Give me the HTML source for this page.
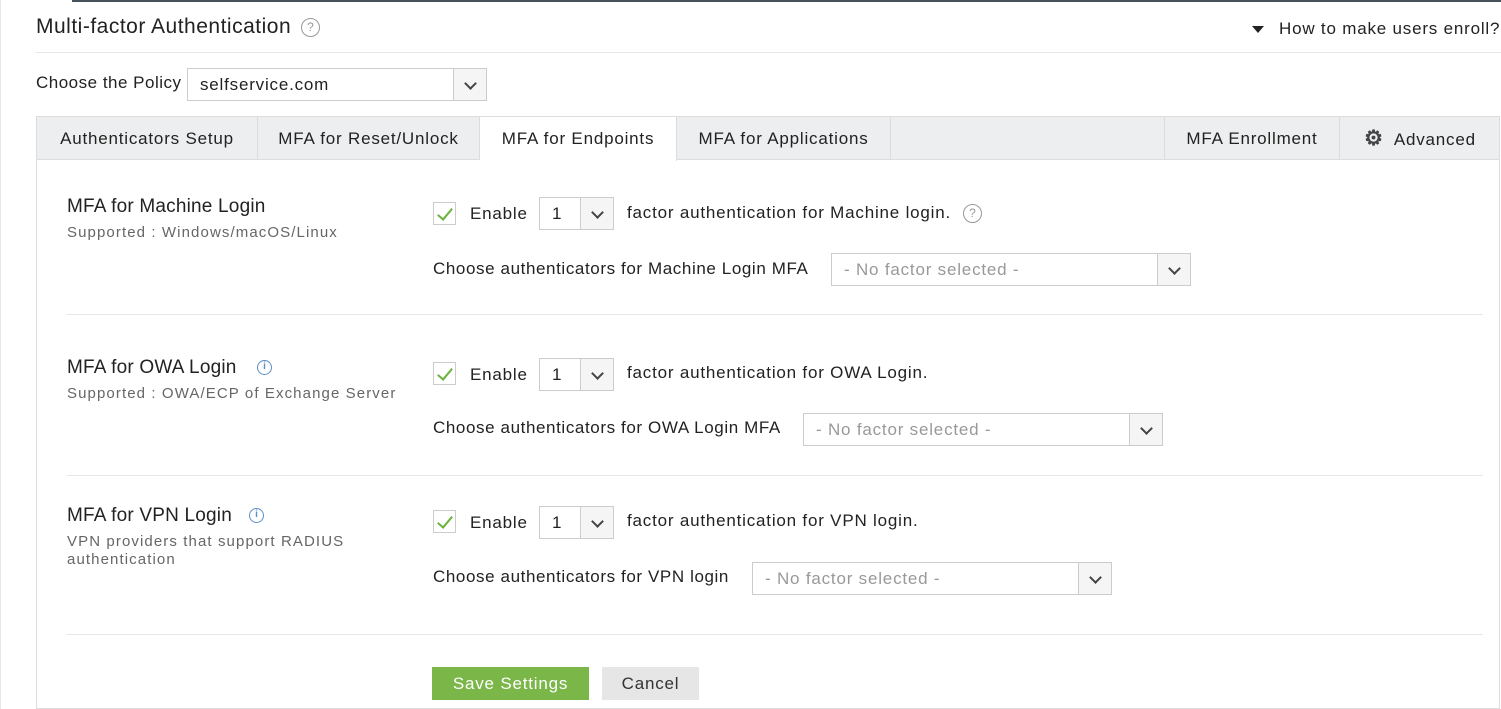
<!DOCTYPE html>
<html><head><meta charset="utf-8"><style>
*{box-sizing:border-box;margin:0;padding:0}
body{width:1501px;height:709px;overflow:hidden;background:#fff;font-family:"Liberation Sans",sans-serif;color:#222;position:relative}
.a{position:absolute}
.t{font-size:17px;white-space:nowrap;letter-spacing:0.8px}
.c{letter-spacing:0.6px}
.h{letter-spacing:0.2px}
.sel{position:absolute;border:1px solid #ccc;background:#fff;height:33px;letter-spacing:0.8px}
.sel .arr{position:absolute;right:0;top:0;bottom:0;width:33px;border-left:1px solid #ccc;background:#f5f5f5}
.sel .arr:after{content:"";position:absolute;left:12px;top:10px;width:7px;height:7px;border-right:2px solid #444;border-bottom:2px solid #444;transform:rotate(45deg)}
.cb{position:absolute;width:23px;height:23px;border:1px solid #ccc;background:#fff}
.cb:after{content:"";position:absolute;left:7px;top:2px;width:6px;height:13px;border-right:2px solid #6bb33f;border-bottom:2px solid #6bb33f;transform:rotate(40deg)}
.tab{position:absolute;top:117px;height:43px;font-size:17px;line-height:43px;text-align:center;border-right:1px solid #dcdcdc;letter-spacing:0.8px;white-space:nowrap}
.hr{position:absolute;height:1px;background:#e6e6e6}
.info{position:absolute;width:15px;height:15px;border:1.5px solid #5b8fc7;border-radius:50%;color:#5b8fc7;font-size:10px;line-height:12px;text-align:center;font-weight:bold}
.q{position:absolute;width:19px;height:19px;border:1.5px solid #999;border-radius:50%;color:#999;font-size:12px;line-height:16px;text-align:center}
.sub{font-size:15px;color:#666;letter-spacing:1.1px;white-space:nowrap}
.ph{color:#999;font-size:17px;position:absolute;left:12px;top:6px}
</style></head><body>
<div class="a" style="left:72px;top:0;width:1429px;height:2px;background:#47525b"></div>
<div class="a" style="left:0;top:0;width:1px;height:709px;background:#e6e6e6"></div>
<div class="a t" style="left:36px;top:15px;font-size:21px;letter-spacing:0.5px">Multi-factor Authentication</div>
<div class="q" style="left:301px;top:18px">?</div>
<div class="a" style="left:1252px;top:26px;border-left:6px solid transparent;border-right:6px solid transparent;border-top:7px solid #222"></div>
<div class="a t" style="left:1279px;top:19px">How to make users enroll?</div>
<div class="hr" style="left:36px;top:52px;width:1465px"></div>
<div class="a t" style="left:36px;top:73px;letter-spacing:0.5px">Choose the Policy</div>
<div class="sel" style="left:187px;top:68px;width:300px"><span class="ph" style="color:#222">selfservice.com</span><div class="arr"></div></div>
<div class="a" style="left:36px;top:116px;width:1464px;height:593px;border:1px solid #ddd"></div>
<div class="a" style="left:37px;top:117px;width:1462px;height:43px;background:#eceeef;border-bottom:1px solid #ddd"></div>
<div class="tab" style="left:37px;width:221px">Authenticators Setup</div>
<div class="tab" style="left:258px;width:222px">MFA for Reset/Unlock</div>
<div class="tab" style="left:480px;width:197px;background:#fff;height:44px">MFA for Endpoints</div>
<div class="tab" style="left:677px;width:214px">MFA for Applications</div>
<div class="tab" style="left:1164px;width:176px;border-left:1px solid #dcdcdc">MFA Enrollment</div>
<div class="tab" style="left:1340px;width:160px;border-right:none"><span style="color:#444;font-size:21px;font-weight:bold">⚙</span>&nbsp; Advanced</div>

<div class="a t h" style="left:67px;top:196px;font-size:19px">MFA for Machine Login</div>
<div class="a sub" style="left:67px;top:224px">Supported : Windows/macOS/Linux</div>
<div class="cb" style="left:433px;top:202px"></div>
<div class="a t" style="left:470px;top:204px">Enable</div>
<div class="sel" style="left:539px;top:197px;width:75px"><span class="ph" style="color:#222">1</span><div class="arr"></div></div>
<div class="a t" style="left:627px;top:203px">factor authentication for Machine login.</div>
<div class="q" style="left:963px;top:204px">?</div>
<div class="a t c" style="left:433px;top:259px">Choose authenticators for Machine Login MFA</div>
<div class="sel" style="left:831px;top:253px;width:360px"><span class="ph">- No factor selected -</span><div class="arr"></div></div>
<div class="hr" style="left:67px;top:314px;width:1416px"></div>

<div class="a t h" style="left:67px;top:357px;font-size:19px">MFA for OWA Login</div>
<div class="info" style="left:257px;top:360px">i</div>
<div class="a sub" style="left:67px;top:385px">Supported : OWA/ECP of Exchange Server</div>
<div class="cb" style="left:433px;top:362px"></div>
<div class="a t" style="left:470px;top:365px">Enable</div>
<div class="sel" style="left:539px;top:358px;width:75px"><span class="ph" style="color:#222">1</span><div class="arr"></div></div>
<div class="a t" style="left:627px;top:363px">factor authentication for OWA Login.</div>
<div class="a t c" style="left:433px;top:418px">Choose authenticators for OWA Login MFA</div>
<div class="sel" style="left:803px;top:413px;width:360px"><span class="ph">- No factor selected -</span><div class="arr"></div></div>
<div class="hr" style="left:67px;top:475px;width:1416px"></div>

<div class="a t h" style="left:67px;top:505px;font-size:19px">MFA for VPN Login</div>
<div class="info" style="left:249px;top:508px">i</div>
<div class="a sub" style="left:67px;top:533px;line-height:18px">VPN providers that support RADIUS<br>authentication</div>
<div class="cb" style="left:433px;top:510px"></div>
<div class="a t" style="left:470px;top:513px">Enable</div>
<div class="sel" style="left:539px;top:506px;width:75px"><span class="ph" style="color:#222">1</span><div class="arr"></div></div>
<div class="a t" style="left:627px;top:511px">factor authentication for VPN login.</div>
<div class="a t c" style="left:433px;top:567px">Choose authenticators for VPN login</div>
<div class="sel" style="left:752px;top:562px;width:360px"><span class="ph">- No factor selected -</span><div class="arr"></div></div>
<div class="hr" style="left:67px;top:634px;width:1416px"></div>

<div class="a t" style="left:432px;top:667px;width:157px;height:33px;background:#7ab648;color:#fff;text-align:center;line-height:33px">Save Settings</div>
<div class="a t" style="left:602px;top:667px;width:97px;height:33px;background:#e6e6e6;color:#333;text-align:center;line-height:33px">Cancel</div>
</body></html>
